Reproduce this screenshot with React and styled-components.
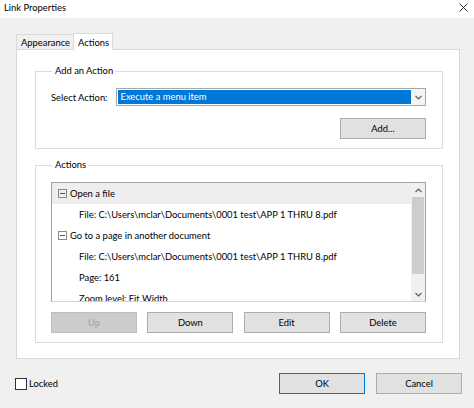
import React from "react";
import styled, { createGlobalStyle } from "styled-components";

const Global = createGlobalStyle`
  html, body { margin: 0; padding: 0; }
  body {
    width: 474px; height: 408px; overflow: hidden;
    background: #f0f0f0;
    font-family: Lato, "Noto Sans", sans-serif;
    font-size: 9.4px; color: #000;
  }
`;

const Window = styled.div`
  width: 474px; height: 408px; display: flex; flex-direction: column;
  background: #f0f0f0; box-sizing: border-box;
`;
const TitleBar = styled.div`
  height: 18px; background: #fff; display: flex; align-items: center;
  justify-content: space-between; padding: 0 6px 0 4px; flex-shrink: 0;
`;
const Title = styled.span`font-size: 9.4px; color: #000; margin-top: -4px;`;
const Close = styled.svg`margin-top: -3px;`;

const Body = styled.div`
  flex: 1; display: flex; flex-direction: column; padding: 14px 12px 0 16px;
`;
const TabRow = styled.div`display: flex; align-items: flex-end; height: 17px;`;
const Tab = styled.div`
  height: ${p => (p.$active ? "17px" : "15px")};
  padding: 0 3px 0 4px; box-sizing: border-box; display: flex; align-items: center;
  background: ${p => (p.$active ? "#fff" : "#f0f0f0")};
  border: 1px solid #d9d9d9; border-bottom: none;
  ${p => (p.$active ? "margin-bottom:-1px; position:relative; z-index:1;" : "border-right:none;")}
`;
const Panel = styled.div`
  width: 444px; height: 310px; box-sizing: border-box; background: #fff;
  border: 1px solid #d9d9d9; padding: 15px 16px 0 18px;
  display: flex; flex-direction: column; gap: 10px;
`;
const Group = styled.fieldset`
  margin: 0; border: 1px solid #dcdcdc; padding: 0 16px 0 15px;
  height: ${p => p.$h}px; box-sizing: border-box; min-width: 0;
  display: flex; flex-direction: column;
`;
const Legend = styled.legend`
  padding: 0 2px 0 3px; margin-left: 1px; line-height: 12px; height: 12px;
`;
const SelectRow = styled.div`
  display: flex; align-items: center; gap: 9px; margin-top: 11px;
`;
const Label = styled.span``;
const Select = styled.div`
  flex: 1; height: 18px; box-sizing: border-box; border: 1px solid #a8a8a8;
  display: flex; background: #fff; padding: 1px 0 1px 1px;
`;
const Selected = styled.div`
  flex: 1; background: #0078d7; color: #fff; padding-left: 2px;
  display: flex; align-items: center; line-height: 1;
`;
const DropBtn = styled.div`
  width: 14px; display: flex; align-items: center; justify-content: center;
  background: #f4f4f4; margin: -1px 0;
`;
const RightRow = styled.div`display: flex; justify-content: flex-end; margin-top: 12px;`;
const Button = styled.button`
  width: 86px; height: 21px; box-sizing: border-box;
  background: ${p => (p.$disabled ? "#cccccc" : "#e1e1e1")};
  border: 1px solid ${p => (p.$primary ? "#0078d7" : p.$disabled ? "#bfbfbf" : "#adadad")};
  color: ${p => (p.$disabled ? "#a0a0a0" : "#000")};
  font: inherit; padding: 0; margin: 0;
`;
const List = styled.div`
  margin-top: 11px; height: 120px; box-sizing: border-box; flex-shrink: 0;
  border: 1px solid #a0a0a0; border-bottom-color: #d4d4d4; display: flex; overflow: hidden;
`;
const ListItems = styled.div`flex: 1; display: flex; flex-direction: column; overflow: hidden;`;
const Row = styled.div`
  height: 21px; flex-shrink: 0; display: flex; align-items: center;
  padding-left: ${p => (p.$child ? 27 : 6)}px; gap: 3px;
  background: ${p => (p.$sel ? "#eeeeee" : "#fff")};
`;
const Collapse = styled.span`
  width: 7px; height: 7px; border: 1px solid #8a8a8a; position: relative; flex-shrink: 0;
  &::after { content: ""; position: absolute; left: 1px; right: 1px; top: 3px; height: 1px; background: #555; }
`;
const Scroll = styled.div`
  width: 14px; background: #f0f0f0; display: flex; flex-direction: column; align-items: stretch;
`;
const Arrow = styled.div`height: 14px; display: flex; align-items: center; justify-content: center;`;
const Thumb = styled.div`height: 77px; background: #cdcdcd; margin: 0 1px;`;
const Track = styled.div`flex: 1;`;
const ButtonRow = styled.div`display: flex; justify-content: space-between; margin-top: 10px;`;
const Footer = styled.div`
  display: flex; align-items: center; justify-content: space-between;
  margin-top: 14px; margin-left: -1px;
`;
const Check = styled.label`display: flex; align-items: center; gap: 2px;`;
const Box = styled.span`width: 10px; height: 10px; border: 1px solid #333; background: #fff;`;
const Buttons = styled.div`display: flex; gap: 11px;`;

const Chevron = ({ up }) => (
  <svg width="7" height="5" viewBox="0 0 7 5">
    <path d={up ? "M0.5 4L3.5 1L6.5 4" : "M0.5 1L3.5 4L6.5 1"} fill="none" stroke="#606060" strokeWidth="1.2" />
  </svg>
);

export default function App() {
  return (
    <>
      <Global />
      <Window>
        <TitleBar>
          <Title>Link Properties</Title>
          <Close width="9" height="9" viewBox="0 0 9 9">
            <path d="M0.5 0.5L8.5 8.5M8.5 0.5L0.5 8.5" stroke="#333" strokeWidth="1" />
          </Close>
        </TitleBar>
        <Body>
          <TabRow>
            <Tab>Appearance</Tab>
            <Tab $active>Actions</Tab>
          </TabRow>
          <Panel>
            <Group $h={84}>
              <Legend>Add an Action</Legend>
              <SelectRow>
                <Label>Select Action:</Label>
                <Select>
                  <Selected>Execute a menu item</Selected>
                  <DropBtn><Chevron /></DropBtn>
                </Select>
              </SelectRow>
              <RightRow><Button>Add...</Button></RightRow>
            </Group>
            <Group $h={184}>
              <Legend>Actions</Legend>
              <List>
                <ListItems>
                  <Row $sel><Collapse />Open a file</Row>
                  <Row $child>File: C:\Users\mclar\Documents\0001 test\APP 1 THRU 8.pdf</Row>
                  <Row><Collapse />Go to a page in another document</Row>
                  <Row $child>File: C:\Users\mclar\Documents\0001 test\APP 1 THRU 8.pdf</Row>
                  <Row $child>Page: 161</Row>
                  <Row $child>Zoom level: Fit Width</Row>
                </ListItems>
                <Scroll>
                  <Arrow><Chevron up /></Arrow>
                  <Thumb />
                  <Track />
                  <Arrow><Chevron /></Arrow>
                </Scroll>
              </List>
              <ButtonRow>
                <Button $disabled>Up</Button>
                <Button>Down</Button>
                <Button>Edit</Button>
                <Button>Delete</Button>
              </ButtonRow>
            </Group>
          </Panel>
          <Footer>
            <Check><Box />Locked</Check>
            <Buttons>
              <Button $primary>OK</Button>
              <Button>Cancel</Button>
            </Buttons>
          </Footer>
        </Body>
      </Window>
    </>
  );
}
